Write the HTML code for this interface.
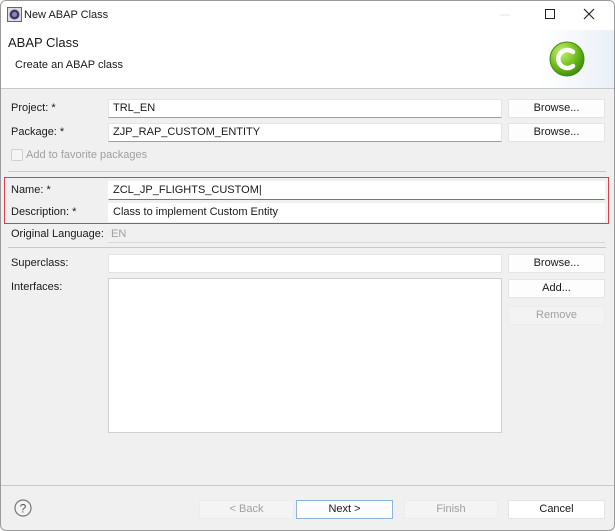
<!DOCTYPE html>
<html><head><meta charset="utf-8"><style>
*{box-sizing:border-box;margin:0;padding:0}
body{width:615px;height:531px;overflow:hidden;background:#fff;font-family:"Liberation Sans",sans-serif;font-size:11px;color:#1a1a1a;position:relative}
.win{position:absolute;left:0;top:0;width:615px;height:531px;border:1px solid #9a9a9a;border-radius:6px;overflow:hidden;background:#f0f0f0}
.title{position:absolute;left:0;top:0;width:100%;height:29px;background:#fff}
.head{position:absolute;left:0;top:29px;width:100%;height:59px;background:linear-gradient(90deg,#fff 88%,#eaf0f8);border-bottom:1px solid #c8c8c8}
.a{position:absolute;white-space:nowrap}
.inp{position:absolute;background:#fff;border:1px solid #e4e4e4;border-bottom-color:#a0a0a0;height:19px;padding:2px 4px;font-size:11px}
.btn{position:absolute;background:#fdfdfd;border:1px solid #e4e4e4;height:19px;text-align:center;line-height:17px;font-size:11px}
.sep{position:absolute;height:1px;background:#c8c8c8}
.dis{color:#a0a0a0}
</style></head><body>
<div class="win">
<div class="title">
<svg class="a" style="left:6px;top:6px" width="15" height="15" viewBox="0 0 15 15"><rect x="0.5" y="0.5" width="14" height="14" fill="#ddd" stroke="#666"/><circle cx="7.5" cy="7.5" r="5" fill="#3b3b70"/><circle cx="7.5" cy="7.5" r="2.5" fill="#8888b0"/></svg>
<div class="a" style="left:23px;top:8px">New ABAP Class</div>
<div class="a" style="left:544px;top:8px;width:10px;height:10px;border:1px solid #222"></div>
<svg class="a" style="left:498px;top:8px" width="12" height="12" viewBox="0 0 12 12"><path d="M1 6H11" stroke="#e4e4e4"/></svg>
<svg class="a" style="left:582px;top:7px" width="12" height="12" viewBox="0 0 12 12"><path d="M1 1L11 11M11 1L1 11" stroke="#222" stroke-width="1.2"/></svg>
</div>
<div class="head">
<div class="a" style="left:7px;top:5px;font-size:13px">ABAP Class</div>
<div class="a" style="left:14px;top:29px">Create an ABAP class</div>
<svg class="a" style="left:546px;top:9px" width="42" height="42" viewBox="0 0 42 42"><defs><radialGradient id="g" cx="35%" cy="30%" r="75%"><stop offset="0" stop-color="#c8f070"/><stop offset=".6" stop-color="#6cbc1c"/><stop offset="1" stop-color="#3d8a0a"/></radialGradient></defs><circle cx="20" cy="20" r="17" fill="url(#g)" stroke="#4a8a12"/><path d="M26 13 A9 9 0 1 0 26 27" fill="none" stroke="#fff" stroke-width="4.5" stroke-linecap="round"/></svg>
</div>
<div class="a" style="left:10px;top:101px">Project: *</div>
<div class="inp" style="left:107px;top:98px;width:394px">TRL_EN</div>
<div class="btn" style="left:507px;top:98px;width:97px">Browse...</div>
<div class="a" style="left:10px;top:125px">Package: *</div>
<div class="inp" style="left:107px;top:122px;width:394px">ZJP_RAP_CUSTOM_ENTITY</div>
<div class="btn" style="left:507px;top:122px;width:97px">Browse...</div>
<div class="a" style="left:10px;top:148px;width:12px;height:12px;border:1px solid #d0d0d0;border-radius:2px;background:#f5f5f5"></div>
<div class="a dis" style="left:25px;top:148px">Add to favorite packages</div>
<div class="sep" style="left:7px;top:170px;width:598px"></div>
<div class="a" style="left:3px;top:176px;width:605px;height:47px;border:1.5px solid #d9404c"></div>
<div class="a" style="left:10px;top:183px">Name: *</div>
<div class="inp" style="left:107px;top:180px;width:497px;border-color:#fff;border-bottom:1.5px solid #3c84d4">ZCL_JP_FLIGHTS_CUSTOM|</div>
<div class="a" style="left:10px;top:205px">Description: *</div>
<div class="inp" style="left:107px;top:202px;width:497px;border-color:#fff">Class to implement Custom Entity</div>
<div class="a" style="left:10px;top:227px">Original Language:</div>
<div class="a dis" style="left:110px;top:227px">EN</div>
<div class="sep" style="left:107px;top:241px;width:497px;background:#d8d8d8"></div>
<div class="sep" style="left:7px;top:246px;width:598px"></div>
<div class="a" style="left:10px;top:256px">Superclass:</div>
<div class="inp" style="left:107px;top:253px;width:394px;border-color:#e4e4e4"></div>
<div class="btn" style="left:507px;top:253px;width:97px">Browse...</div>
<div class="a" style="left:10px;top:280px">Interfaces:</div>
<div class="a" style="left:107px;top:277px;width:394px;height:155px;background:#fff;border:1px solid #d0d0d0"></div>
<div class="btn" style="left:507px;top:278px;width:97px">Add...</div>
<div class="btn dis" style="left:507px;top:305px;width:97px;background:#f3f3f3;border-color:#ececec">Remove</div>
<div class="sep" style="left:0;top:484px;width:615px"></div>
<svg class="a" style="left:13px;top:498px" width="18" height="18" viewBox="0 0 18 18"><circle cx="9" cy="9" r="8" fill="#f4f4f4" stroke="#777" stroke-width="1.2"/><text x="9" y="13.5" text-anchor="middle" font-family="Liberation Sans" font-size="12" fill="#555">?</text></svg>
<div class="btn dis" style="left:198px;top:499px;width:95px;background:#f4f4f4;border-color:#ececec">&lt; Back</div>
<div class="btn" style="left:295px;top:499px;width:97px;border-color:#8fb4dc">Next &gt;</div>
<div class="btn dis" style="left:403px;top:499px;width:94px;background:#f4f4f4;border-color:#ececec">Finish</div>
<div class="btn" style="left:507px;top:499px;width:97px;background:#fff">Cancel</div>
</div>
</body></html>
